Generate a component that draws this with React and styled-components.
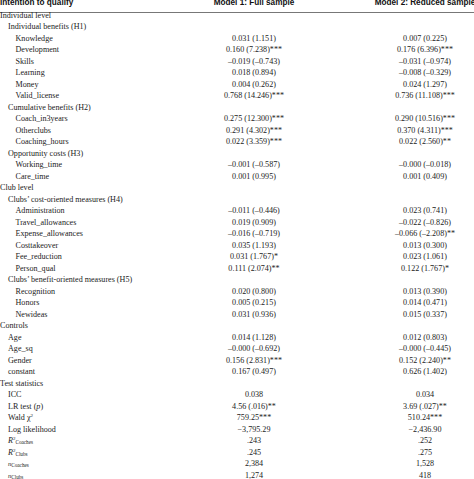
import React from 'react';
import styled, { createGlobalStyle } from 'styled-components';

const Global = createGlobalStyle`
  html, body { margin: 0; padding: 0; background: #fff; overflow: hidden; }
  #root { width: 474px; height: 479px; overflow: hidden; }
`;

const Table = styled.div`
  width: 474px;
  margin-top: -2.5px;
  overflow: hidden;
  color: #222;
`;

const HeaderRow = styled.div`
  display: grid;
  grid-template-columns: 170px 168px 174px;
  width: 512px;
  font-family: "Liberation Sans", Arial, sans-serif;
  font-weight: bold;
  font-size: 8.2px;
  line-height: 9px;
  color: #111;
  padding-bottom: 5px;
  border-bottom: 1.5px solid #777;
  white-space: nowrap;
`;

const HeadCell = styled.div`
  text-align: ${(p) => (p.$center ? 'center' : 'left')};
`;

const Row = styled.div`
  display: grid;
  grid-template-columns: 170px 168px 174px;
  width: 512px;
  height: 11.5px;
  font-family: "Liberation Serif", "Times New Roman", serif;
  font-size: 8.1px;
  line-height: 6px;
  white-space: nowrap;
`;

const Label = styled.div`
  padding-left: ${(p) => [0, 8, 15.5][p.$level]}px;
`;

const Value = styled.div`
  text-align: center;
`;

const It = styled.i`
  font-style: italic;
`;

const Sup = styled.sup`
  font-size: 5px;
  line-height: 0;
  vertical-align: 3px;
`;

const Sub = styled.sub`
  font-size: 5.2px;
  line-height: 0;
  vertical-align: -1px;
`;

const SmallIt = styled.i`
  font-style: italic;
  font-size: 6.5px;
`;

const rows = [
  { l: 'Individual level', v: 0 },
  { l: 'Individual benefits (H1)', v: 1 },
  { l: 'Knowledge', v: 2, a: '0.031 (1.151)', b: '0.007 (0.225)' },
  { l: 'Development', v: 2, a: '0.160 (7.238)***', b: '0.176 (6.396)***' },
  { l: 'Skills', v: 2, a: '–0.019 (–0.743)', b: '–0.031 (–0.974)' },
  { l: 'Learning', v: 2, a: '0.018 (0.894)', b: '–0.008 (–0.329)' },
  { l: 'Money', v: 2, a: '0.004 (0.262)', b: '0.024 (1.297)' },
  { l: 'Valid_license', v: 2, a: '0.768 (14.246)***', b: '0.736 (11.108)***' },
  { l: 'Cumulative benefits (H2)', v: 1 },
  { l: 'Coach_in3years', v: 2, a: '0.275 (12.300)***', b: '0.290 (10.516)***' },
  { l: 'Otherclubs', v: 2, a: '0.291 (4.302)***', b: '0.370 (4.311)***' },
  { l: 'Coaching_hours', v: 2, a: '0.022 (3.359)***', b: '0.022 (2.560)**' },
  { l: 'Opportunity costs (H3)', v: 1 },
  { l: 'Working_time', v: 2, a: '–0.001 (–0.587)', b: '–0.000 (–0.018)' },
  { l: 'Care_time', v: 2, a: '0.001 (0.995)', b: '0.001 (0.409)' },
  { l: 'Club level', v: 0 },
  { l: 'Clubs’ cost-oriented measures (H4)', v: 1 },
  { l: 'Administration', v: 2, a: '–0.011 (–0.446)', b: '0.023 (0.741)' },
  { l: 'Travel_allowances', v: 2, a: '0.019 (0.909)', b: '–0.022 (–0.826)' },
  { l: 'Expense_allowances', v: 2, a: '–0.016 (–0.719)', b: '–0.066 (–2.208)**' },
  { l: 'Costtakeover', v: 2, a: '0.035 (1.193)', b: '0.013 (0.300)' },
  { l: 'Fee_reduction', v: 2, a: '0.031 (1.767)*', b: '0.023 (1.061)' },
  { l: 'Person_qual', v: 2, a: '0.111 (2.074)**', b: '0.122 (1.767)*' },
  { l: 'Clubs’ benefit-oriented measures (H5)', v: 1 },
  { l: 'Recognition', v: 2, a: '0.020 (0.800)', b: '0.013 (0.390)' },
  { l: 'Honors', v: 2, a: '0.005 (0.215)', b: '0.014 (0.471)' },
  { l: 'Newideas', v: 2, a: '0.031 (0.936)', b: '0.015 (0.337)' },
  { l: 'Controls', v: 0 },
  { l: 'Age', v: 1, a: '0.014 (1.128)', b: '0.012 (0.803)' },
  { l: 'Age_sq', v: 1, a: '–0.000 (–0.692)', b: '–0.000 (–0.445)' },
  { l: 'Gender', v: 1, a: '0.156 (2.831)***', b: '0.152 (2.240)**' },
  { l: 'constant', v: 1, a: '0.167 (0.497)', b: '0.626 (1.402)' },
  { l: 'Test statistics', v: 0 },
  { l: 'ICC', v: 1, a: '0.038', b: '0.034' },
  { l: <>LR test (<It>p</It>)</>, v: 1, a: '4.56 (.016)**', b: '3.69 (.027)**' },
  { l: <>Wald χ<Sup>2</Sup></>, v: 1, a: '759.25***', b: '510.24***' },
  { l: 'Log likelihood', v: 1, a: '−3,795.29', b: '−2,436.90' },
  { l: <><It>R</It><Sup>2</Sup><Sub>Coaches</Sub></>, v: 1, a: '.243', b: '.252' },
  { l: <><It>R</It><Sup>2</Sup><Sub>Clubs</Sub></>, v: 1, a: '.245', b: '.275' },
  { l: <><SmallIt>n</SmallIt><Sub>Coaches</Sub></>, v: 1, a: '2,384', b: '1,528' },
  { l: <><SmallIt>n</SmallIt><Sub>Clubs</Sub></>, v: 1, a: '1,274', b: '418' },
];

export default function App() {
  return (
    <>
      <Global />
      <Table>
        <HeaderRow>
          <HeadCell>Intention to qualify</HeadCell>
          <HeadCell $center>Model 1: Full sample</HeadCell>
          <HeadCell $center>Model 2: Reduced sample</HeadCell>
        </HeaderRow>
        {rows.map((r, i) => (
          <Row key={i}>
            <Label $level={r.v}>{r.l}</Label>
            <Value>{r.a || ''}</Value>
            <Value>{r.b || ''}</Value>
          </Row>
        ))}
      </Table>
    </>
  );
}
